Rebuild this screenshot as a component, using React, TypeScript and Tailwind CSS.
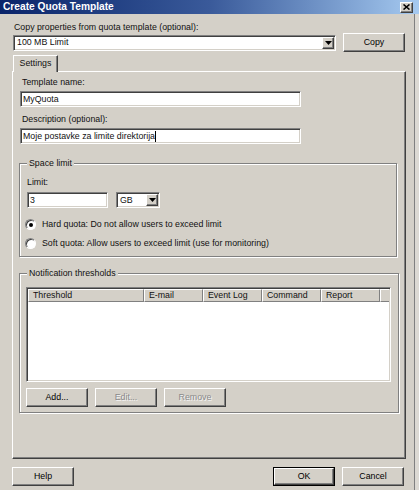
import React from "react";

const insetCls =
  "bg-white border border-t-[#808080] border-l-[#808080] border-b-white border-r-white shadow-[inset_1px_1px_0_#404040,inset_-1px_-1px_0_#d4d0c8]";
const raisedCls =
  "bg-[#d4d0c8] border border-t-white border-l-white border-b-[#404040] border-r-[#404040] shadow-[inset_-1px_-1px_0_#808080]";

function Arrow() {
  return (
    <div className={`w-[12px] h-full flex items-center justify-center ${raisedCls}`}>
      <svg width="7" height="4" viewBox="0 0 7 4">
        <polygon points="0,0 7,0 3.5,4" fill="#000" />
      </svg>
    </div>
  );
}

function Button({
  label,
  disabled,
  isDefault,
  className = "",
}: {
  label: string;
  disabled?: boolean;
  isDefault?: boolean;
  className?: string;
}) {
  const inner = (
    <div
      className={`w-full h-full flex items-center justify-center ${raisedCls} ${
        disabled ? "text-[#8a8a8a] [text-shadow:1px_1px_0_#f4f4f4]" : "text-black"
      }`}
    >
      {label}
    </div>
  );
  if (isDefault) {
    return (
      <div className={`w-[62px] h-[19px] border border-black ${className}`}>{inner}</div>
    );
  }
  return <div className={`w-[62px] h-[19px] ${className}`}>{inner}</div>;
}

function Radio({ checked }: { checked?: boolean }) {
  return (
    <div className="w-[11px] h-[11px] rounded-full bg-white border border-t-[#808080] border-l-[#808080] border-r-white border-b-white shadow-[inset_1px_1px_0_#404040] flex items-center justify-center">
      {checked && <div className="w-[4px] h-[4px] rounded-full bg-black" />}
    </div>
  );
}

const fieldsetCls =
  "w-[378px] border border-[#808080] shadow-[1px_1px_0_#fff,inset_1px_1px_0_#fff] px-[7px]";

export default function App() {
  const cols = [
    { name: "Threshold", w: "w-[116px]" },
    { name: "E-mail", w: "w-[59px]" },
    { name: "Event Log", w: "w-[59px]" },
    { name: "Command", w: "w-[59px]" },
    { name: "Report", w: "w-[59px]" },
  ];
  return (
    <div className="w-[419px] h-[493px] bg-white font-['Liberation_Sans',Arial,sans-serif] text-[8.8px] leading-[11px] text-[#111]">
      <div className="w-[419px] h-[490px] bg-[#d4d0c8] flex flex-col">
        {/* Title bar */}
        <div className="h-[14px] flex items-center bg-linear-to-r from-[#0a246a] via-[#3a5a9a] to-[#a6caf0] pl-[3px] pr-[6px]">
          <span className="flex-1 text-white font-bold text-[10.2px] leading-[14px]">
            Create Quota Template
          </span>
          <div className={`w-[13px] h-[11px] flex items-center justify-center ${raisedCls}`}>
            <svg width="7" height="6" viewBox="0 0 7 6">
              <path d="M0.5 0.5 L6.5 5.5 M6.5 0.5 L0.5 5.5" stroke="#000" strokeWidth="1.6" />
            </svg>
          </div>
        </div>

        <div className="flex flex-1">
          <div className="w-[414px] flex flex-col pl-[13px]">
            <div className="mt-[8px] ml-[1px]">Copy properties from quota template (optional):</div>
            <div className="h-[19px] flex items-center">
              <div className={`w-[323px] h-[16px] p-px flex items-center ${insetCls}`}>
                <span className="flex-1 pl-[2px]">100 MB Limit</span>
                <Arrow />
              </div>
              <Button label="Copy" className="ml-[7px]" />
            </div>

            {/* Tab */}
            <div className="mt-[3px] flex">
              <div className="relative z-10 w-[45px] h-[17px] bg-[#d4d0c8] border-t border-l border-r border-t-white border-l-white border-r-[#404040] shadow-[inset_-1px_0_0_#808080] flex items-center justify-center pb-[1px]">
                Settings
              </div>
            </div>

            {/* Panel */}
            <div className="-mt-px -ml-px w-[394px] h-[388px] border border-t-white border-l-white border-b-[#404040] border-r-[#404040] shadow-[inset_-1px_-1px_0_#808080] flex flex-col">
              <div className="mt-[5px] ml-[9px]">Template name:</div>
              <div className={`mt-[3px] ml-[7px] w-[281px] h-[16px] flex items-center pl-[2px] ${insetCls}`}>
                MyQuota
              </div>
              <div className="mt-[7px] ml-[9px]">Description (optional):</div>
              <div className={`mt-[3px] ml-[7px] w-[281px] h-[16px] flex items-center pl-[2px] ${insetCls}`}>
                <span>Moje postavke za limite direktorija</span>
                <span className="inline-block w-px h-[11px] bg-black" />
              </div>

              {/* Space limit */}
              <fieldset className={`mt-[14px] ml-[6px] pb-[6px] ${fieldsetCls}`}>
                <legend className="px-[2px] bg-[#d4d0c8]">Space limit</legend>
                <div className="mt-[8px]">Limit:</div>
                <div className="mt-[4px] flex">
                  <div className={`w-[81px] h-[16px] flex items-center pl-[2px] ${insetCls}`}>3</div>
                  <div className={`ml-[8px] w-[44px] h-[16px] p-px flex items-center ${insetCls}`}>
                    <span className="flex-1 pl-[2px]">GB</span>
                    <Arrow />
                  </div>
                </div>
                <div className="mt-[10px] h-[13px] flex items-center -ml-[2px]">
                  <Radio checked />
                  <span className="ml-[6px]">Hard quota: Do not allow users to exceed limit</span>
                </div>
                <div className="mt-[6px] h-[13px] flex items-center -ml-[2px]">
                  <Radio />
                  <span className="ml-[6px]">Soft quota: Allow users to exceed limit (use for monitoring)</span>
                </div>
              </fieldset>

              {/* Notification thresholds */}
              <fieldset className={`mt-[11px] ml-[6px] pb-[5px] ${fieldsetCls}`}>
                <legend className="px-[2px] bg-[#d4d0c8]">Notification thresholds</legend>
                <div className={`mt-[8px] -ml-px w-[365px] h-[95px] p-px flex flex-col ${insetCls}`}>
                  <div className="h-[13px] flex">
                    {cols.map((c) => (
                      <div
                        key={c.name}
                        className={`${c.w} h-full pl-[4px] flex items-center bg-[#d4d0c8] border-t border-l border-r border-b border-t-white border-l-white border-r-[#808080] border-b-[#808080]`}
                      >
                        {c.name}
                      </div>
                    ))}
                    <div className="flex-1 h-full bg-[#d4d0c8] border-t border-l border-b border-t-white border-l-white border-b-[#808080]" />
                  </div>
                  <div className="flex-1 bg-white" />
                </div>
                <div className="mt-[6px] -ml-px flex gap-[7px]">
                  <Button label="Add..." />
                  <Button label="Edit..." disabled />
                  <Button label="Remove" disabled />
                </div>
              </fieldset>
            </div>

            {/* Footer */}
            <div className="mt-[8px] -ml-px w-[392px] flex">
              <Button label="Help" />
              <div className="ml-auto flex gap-[7px]">
                <Button label="OK" isDefault />
                <Button label="Cancel" />
              </div>
            </div>
          </div>
          <div className="w-px bg-[#808080]" />
          <div className="flex-1 bg-[#dcd9d3]" />
        </div>
      </div>
    </div>
  );
}
